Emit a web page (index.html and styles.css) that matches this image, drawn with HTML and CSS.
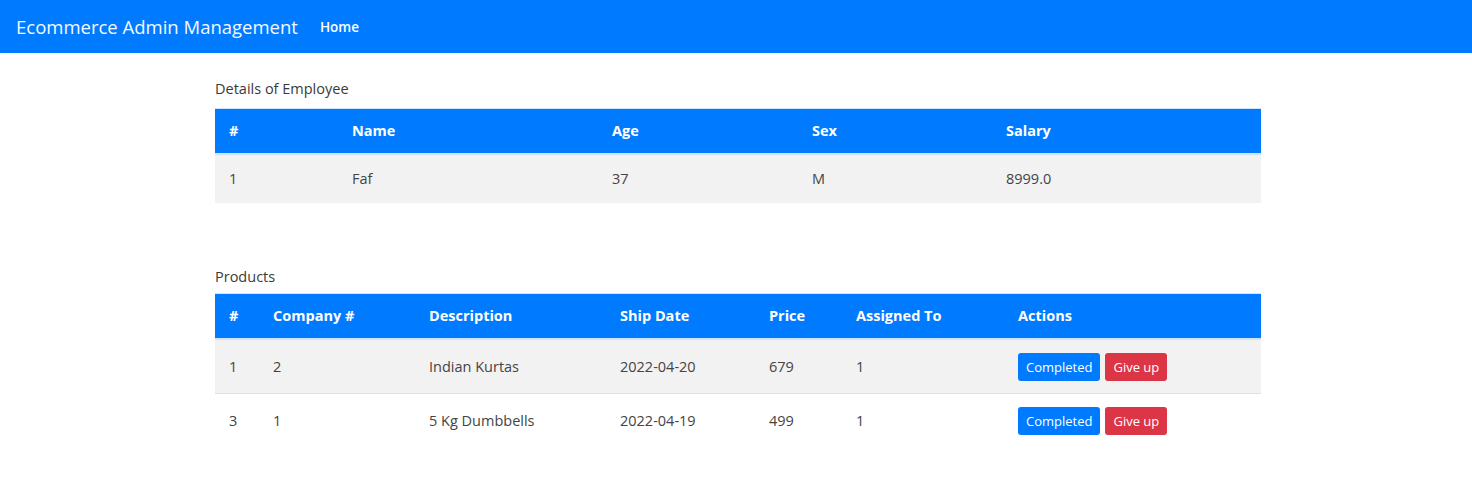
FILE: index.html
```html
<!DOCTYPE html>
<html lang="en">
<head>
<meta charset="utf-8">
<title>Ecommerce Admin Management</title>
<link rel="stylesheet" href="styles.css">
</head>
<body>
<nav class="navbar">
  <span class="brand">Ecommerce Admin Management</span>
  <a class="nav-link" href="#">Home</a>
</nav>
<main class="container">
  <section class="section section-employee">
    <h2 class="section-title">Details of Employee</h2>
    <table class="table">
      <colgroup>
        <col class="e1"><col class="e2"><col class="e3"><col class="e4"><col class="e5">
      </colgroup>
      <thead>
        <tr><th>#</th><th>Name</th><th>Age</th><th>Sex</th><th>Salary</th></tr>
      </thead>
      <tbody>
        <tr class="odd"><td>1</td><td>Faf</td><td>37</td><td>M</td><td>8999.0</td></tr>
      </tbody>
    </table>
  </section>
  <section class="section section-products">
    <h2 class="section-title">Products</h2>
    <table class="table">
      <colgroup>
        <col class="p1"><col class="p2"><col class="p3"><col class="p4"><col class="p5"><col class="p6"><col class="p7">
      </colgroup>
      <thead>
        <tr><th>#</th><th>Company #</th><th>Description</th><th>Ship Date</th><th>Price</th><th>Assigned To</th><th>Actions</th></tr>
      </thead>
      <tbody>
        <tr class="odd">
          <td>1</td><td>2</td><td>Indian Kurtas</td><td>2022-04-20</td><td>679</td><td>1</td>
          <td class="actions-cell"><div class="actions"><button class="btn btn-primary">Completed</button><button class="btn btn-danger">Give up</button></div></td>
        </tr>
        <tr>
          <td>3</td><td>1</td><td>5 Kg Dumbbells</td><td>2022-04-19</td><td>499</td><td>1</td>
          <td class="actions-cell"><div class="actions"><button class="btn btn-primary">Completed</button><button class="btn btn-danger">Give up</button></div></td>
        </tr>
      </tbody>
    </table>
  </section>
</main>
</body>
</html>
```

FILE: styles.css
```css
* { box-sizing: border-box; }

body {
  margin: 0;
  background: #ffffff;
  font-family: "Open Sans", "Noto Sans", sans-serif;
  color: #333;
}

.navbar {
  height: 53px;
  background: #007bff;
  display: flex;
  align-items: center;
  padding: 0 16px;
  gap: 22px;
}

.brand {
  font-size: 18.5px;
  color: #f4f9ff;
  line-height: 26px;
}

.nav-link {
  font-size: 13.5px;
  font-weight: 600;
  color: #ffffff;
  text-decoration: none;
  line-height: 20px;
}

.container {
  width: 1050px;
  margin: 0 auto;
  padding-left: 4px;
}

.section-employee { padding-top: 26px; }
.section-products { padding-top: 64px; }

.section-title {
  margin: 0 0 9px;
  font-size: 14.5px;
  font-weight: 400;
  line-height: 20px;
  color: #3a3a3a;
}

.section-products .section-title { margin-bottom: 6px; }

.table {
  width: 100%;
  border-collapse: collapse;
  table-layout: fixed;
  font-size: 14.5px;
}

.table th {
  background: #007bff;
  color: #ffffff;
  font-weight: 700;
  text-align: left;
  padding: 12px 14px;
  line-height: 20px;
  border-top: 1px solid #cfe4fb;
  border-bottom: 2px solid #cfe4fb;
}

.table td {
  padding: 12px 14px;
  line-height: 24px;
  border-top: 1px solid #dee2e6;
  color: #444;
  vertical-align: middle;
}

.table tr.odd td { background: #f2f2f2; }

.e1 { width: 123px; }
.e2 { width: 260px; }
.e3 { width: 200px; }
.e4 { width: 194px; }
.e5 { width: 269px; }

.p1 { width: 44px; }
.p2 { width: 156px; }
.p3 { width: 191px; }
.p4 { width: 149px; }
.p5 { width: 87px; }
.p6 { width: 162px; }
.p7 { width: 257px; }

.table td.actions-cell { padding-top: 13px; padding-bottom: 12px; }

.actions {
  display: flex;
  gap: 5px;
  align-items: center;
}

.btn {
  font-family: "Open Sans", "Noto Sans", sans-serif;
  font-size: 13px;
  height: 28px;
  padding: 0 8px;
  border: none;
  border-radius: 3px;
  color: #ffffff;
  line-height: 28px;
  cursor: pointer;
}

.btn-primary { background: #007bff; }
.btn-danger { background: #dc3545; }
```
